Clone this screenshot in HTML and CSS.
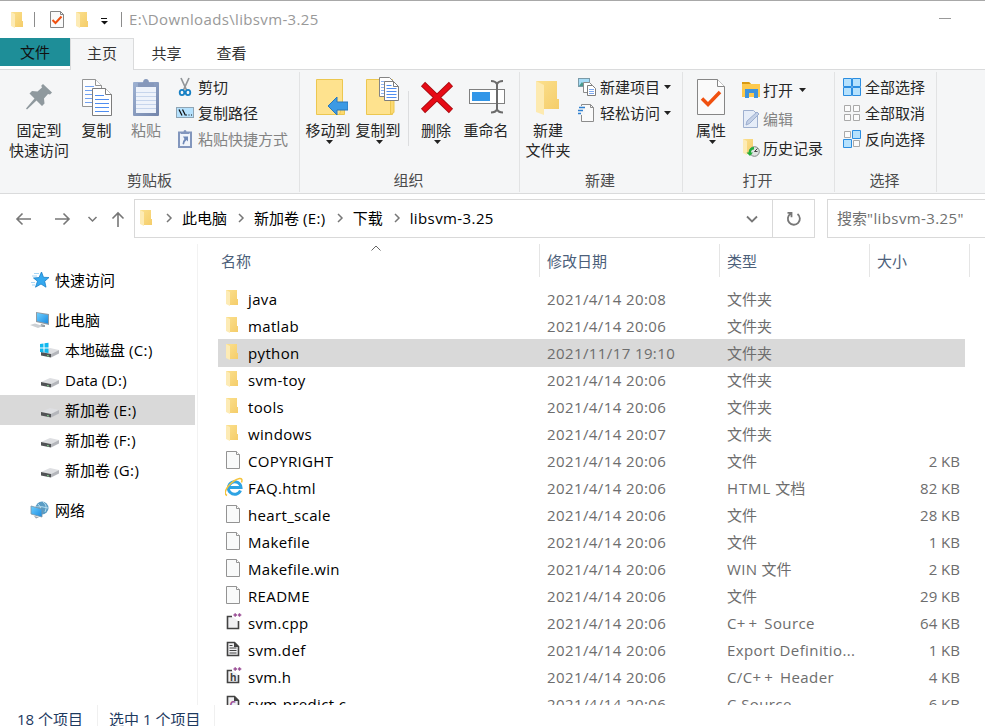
FILE: index.html
```html
<!DOCTYPE html>
<html lang="zh-CN">
<head>
    <meta charset="UTF-8">
    <meta name="viewport" content="width=device-width, initial-scale=1.0">
    <title>E:\Downloads\libsvm-3.25</title>
    <link rel="stylesheet" href="styles.css">
</head>
<body>
    <!-- Shared icons -->
    <svg class="sprite">
        <defs>
            <linearGradient id="gFolder" x1="0" y1="0" x2="1" y2="1">
                <stop offset="0" stop-color="#fbe08e"/>
                <stop offset="1" stop-color="#f5cd6a"/>
            </linearGradient>
            <linearGradient id="gScreen" x1="0" y1="0" x2="1" y2="1">
                <stop offset="0" stop-color="#6fd0ff"/>
                <stop offset="1" stop-color="#1a8ae0"/>
            </linearGradient>
            <linearGradient id="gPaste" x1="0" y1="0" x2="1" y2="1">
                <stop offset="0" stop-color="#9db1d2"/>
                <stop offset="1" stop-color="#7385ab"/>
            </linearGradient>
        </defs>
        <symbol id="folder" viewBox="0 0 16 18">
            <path d="M1 1h11v9h1v6H3z" fill="url(#gFolder)"/>
            <path d="M1 1l4 2v14l-4-2z" fill="#fdebb5"/>
        </symbol>
        <symbol id="file" viewBox="0 0 18 20">
            <path d="M1.500 1.500h10l3 3v14h-13z" fill="#f9fafa" stroke="#939393"/>
            <path d="M11.500 1.500v3h3" fill="#fff" stroke="#939393"/>
        </symbol>
        <symbol id="drive" viewBox="0 0 20 16">
            <path d="M1 9l9-4 9 2-8 4z" fill="#dedfe2"/>
            <path d="M11 11l8-4v3.500l-8 4z" fill="#b4b6bb"/>
            <path d="M1 9l10 2v3.500L1 12.500z" fill="#505255"/>
            <path d="M7 12l2 .4v1l-2-.4z" fill="#7fd08a"/>
        </symbol>
        <symbol id="down" viewBox="0 0 7 4">
            <path d="M0 0h7L3.500 4z" fill="#222"/>
        </symbol>
        <symbol id="sep" viewBox="0 0 8 10">
            <path d="M2 1l4 4-4 4" fill="none" stroke="#777" stroke-width="1.500"/>
        </symbol>
        <symbol id="check" viewBox="0 0 30 38">
            <path d="M1.500 1.500h20l7 7v28h-27z" fill="#fafafa" stroke="#868686"/>
            <path d="M21.500 1.500v7h7" fill="#fff" stroke="#868686"/>
            <path d="M6 20.500l6 6L24 14" fill="none" stroke="#f0500f" stroke-width="3.500"/>
        </symbol>
        <symbol id="page" viewBox="0 0 22 30">
            <path d="M1.500 1.500h13l6 6v21h-19z" fill="#fff" stroke="#7d7d7d"/>
            <path d="M14.500 1.500v6h6" fill="#fff" stroke="#7d7d7d"/>
            <path d="M4 8.500h9M4 12.500h14M4 16.500h14M4 20.500h14M4 24.500h14" stroke="#4f8df0"/>
        </symbol>
    </svg>

    <div class="titlebar">
        <svg class="tb-folder" width="16" height="18"><use href="#folder"/></svg>
        <span class="tb-line"></span>
        <svg class="tb-check" width="16" height="19" viewBox="0 0 16 19">
            <path d="M1.500 1.500h10l3 3v13h-13z" fill="#fafafa" stroke="#868686"/>
            <path d="M11.500 1.500v3h3" fill="none" stroke="#868686"/>
            <path d="M3.500 10l3 3 6-6.500" fill="none" stroke="#f0500f" stroke-width="2"/>
        </svg>
        <svg class="tb-folder2" width="16" height="18"><use href="#folder"/></svg>
        <svg class="tb-custom" width="9" height="8" viewBox="0 0 9 8">
            <path d="M1 1.500h6" stroke="#111"/>
            <path d="M1 4h7L4.500 7.500z" fill="#111"/>
        </svg>
        <span class="tb-line tb-line2"></span>
        <span class="title">E:\Downloads\libsvm-3.25</span>
        <span class="minimize"></span>
    </div>

    <div class="tabs">
        <div class="tab tab-file">文件</div>
        <div class="tab active">主页</div>
        <div class="tab">共享</div>
        <div class="tab">查看</div>
    </div>

    <div class="ribbon">
        <div class="group clipboard">
            <div class="tools">
                <div class="big pin">
                    <svg width="40" height="42" viewBox="0 0 40 42">
                        <path d="M24 7l9 8.500-2 2-2-.5-4 4.500.5 5-2.500 2.500-5.500-5.500L8 32.500 7 31.500l8.500-10-5-5 2.500-2.500 5.500.5 4.500-4-.8-1.800z" fill="#8f999e"/>
                    </svg>
                    <span>固定到<br>快速访问</span>
                </div>
                <div class="big copy">
                    <svg width="40" height="42" viewBox="0 0 40 42">
                        <use href="#page" x="4" y="1" width="22" height="30" opacity="0.8"/>
                        <use href="#page" x="14" y="10" width="22" height="30"/>
                    </svg>
                    <span>复制</span>
                </div>
                <div class="big paste disabled">
                    <svg width="40" height="42" viewBox="0 0 40 42">
                        <rect x="7" y="5" width="26" height="34" rx="1" fill="url(#gPaste)"/>
                        <path d="M10 10h20v26H10z" fill="#eef3fb"/>
                        <path d="M10 15.500h20M10 19.500h20M10 23.500h20M10 27.500h20M10 31.500h20" stroke="#c6d5ec"/>
                        <path d="M12 10V6h5a3 4 0 0 1 6 0h5v4z" fill="#8698bb"/>
                    </svg>
                    <span>粘贴</span>
                </div>
                <div class="list">
                    <div class="small">
                        <svg width="18" height="20" viewBox="0 0 18 20">
                            <path d="M5 1l5.500 12M13 1L7.500 13" stroke="#929699" stroke-width="1.700"/>
                            <ellipse cx="6" cy="15.500" rx="2.300" ry="2.700" fill="none" stroke="#1780c4" stroke-width="1.800"/>
                            <ellipse cx="12" cy="15.500" rx="2.300" ry="2.700" fill="none" stroke="#1780c4" stroke-width="1.800"/>
                        </svg>
                        <span>剪切</span>
                    </div>
                    <div class="small">
                        <svg width="18" height="20" viewBox="0 0 18 20">
                            <rect x=".5" y="4.500" width="17" height="10" fill="#b5e1fd" stroke="#8fa5b5"/>
                            <path d="M3 6.500l3 6M6.500 6.500l3 6" stroke="#111" stroke-width="1.300"/>
                            <path d="M10 12h1M12.500 12h1M15 12h1" stroke="#111"/>
                        </svg>
                        <span>复制路径</span>
                    </div>
                    <div class="small disabled">
                        <svg width="18" height="20" viewBox="0 0 18 20">
                            <rect x="3" y="3.500" width="12" height="14.500" fill="#f0f4fa" stroke="#8296bd" stroke-width="2"/>
                            <path d="M5 5V3h2.500a1.500 2 0 0 1 3 0H13v2z" fill="#8296bd"/>
                            <path d="M7 7.500h5v5l-1.500-1.500Q8 13 8 15.500L6.500 15q0-3 2-5z" fill="#6f89b8"/>
                        </svg>
                        <span>粘贴快捷方式</span>
                    </div>
                </div>
            </div>
            <div class="caption">剪贴板</div>
        </div>

        <div class="group organize">
            <div class="tools">
                <div class="big">
                    <svg width="40" height="42" viewBox="0 0 40 42">
                        <path d="M8.500 2.500h26v35h-26z" fill="#fee28e" stroke="#ecc750"/>
                        <path d="M34.500 27h2v10.500h-5z" fill="#fbd970" stroke="#ecc750"/>
                        <path d="M20 29l9-9v5h11v8H29v5z" fill="#3c9ae4" stroke="#2877bb"/>
                    </svg>
                    <span>移动到</span>
                    <svg class="arrow" width="7" height="4"><use href="#down"/></svg>
                </div>
                <div class="big">
                    <svg width="42" height="42" viewBox="-1 0 42 42">
                        <path d="M8.500 2.500h26v35h-26z" fill="#fee28e" stroke="#ecc750"/>
                        <path d="M32.500 37.500v-14h3.500v12z" fill="#fbd970" stroke="#ecc750"/>
                        <path d="M21.500.5h10l4 4v15h-14z" fill="#fff" stroke="#858585"/>
                        <path d="M23 4.500h7M23 7.500h9M23 10.500h9M23 13.500h9M23 16.500h9" stroke="#8fb5f2"/>
                        <path d="M26.500 4.500h9l5 5v14h-14z" fill="#fff" stroke="#7d7d7d"/>
                        <path d="M35.500 4.500v5h5" fill="none" stroke="#7d7d7d"/>
                        <path d="M28.500 8.500h5M28.500 11.500h10M28.500 14.500h10M28.500 17.500h10M28.500 20.500h10" stroke="#4f8df0"/>
                    </svg>
                    <span>复制到</span>
                    <svg class="arrow" width="7" height="4"><use href="#down"/></svg>
                </div>
                <div class="split"></div>
                <div class="big delete">
                    <svg width="40" height="42" viewBox="0 0 40 42">
                        <path d="M7 7l28 27M35 7L7 34" stroke="#a80d12" stroke-width="6"/>
                        <path d="M7.500 7.500l27 26M34.500 7.500l-27 26" stroke="#e60b16" stroke-width="4.500"/>
                    </svg>
                    <span>删除</span>
                    <svg class="arrow" width="7" height="4"><use href="#down"/></svg>
                </div>
                <div class="big">
                    <svg width="40" height="42" viewBox="0 0 40 42">
                        <rect x="3.500" y="12.500" width="35" height="14" fill="#fff" stroke="#808080"/>
                        <rect x="6" y="15" width="18" height="9" fill="#3296e8"/>
                        <path d="M25 4q4.500 0 6 3 1.500-3 6-3M25 35.500q4.500 0 6-3 1.500 3 6 3M31 6v27" fill="none" stroke="#6b6b6b" stroke-width="2"/>
                    </svg>
                    <span>重命名</span>
                </div>
            </div>
            <div class="caption">组织</div>
        </div>

        <div class="group new">
            <div class="tools">
                <div class="big">
                    <svg width="40" height="42" viewBox="0 0 40 42">
                        <path d="M8 4h21v18h2v10H15z" fill="url(#gFolder)"/>
                        <path d="M8 4l8 4v30l-8-3z" fill="#fdeab0"/>
                    </svg>
                    <span>新建<br>文件夹</span>
                </div>
                <div class="list">
                    <div class="small">
                        <svg width="18" height="20" viewBox="0 0 18 20">
                            <rect x=".5" y="1.500" width="11" height="8" fill="#a6dcf7" stroke="#7a9aa8"/>
                            <path d="M1 9l3-4 3 4z" fill="#4a9a8c"/>
                            <path d="M5.500 5.500h6l3 3v7h-9z" fill="#fff" stroke="#8c8c8c"/>
                            <path d="M9.500 8.500h5l3 3v7h-8z" fill="#fff" stroke="#7d7d7d"/>
                            <path d="M11 12.500h5M11 14.500h5M11 16.500h5" stroke="#7fa9ee"/>
                        </svg>
                        <span>新建项目</span>
                        <svg class="arrow" width="7" height="4"><use href="#down"/></svg>
                    </div>
                    <div class="small">
                        <svg width="18" height="20" viewBox="0 0 18 20">
                            <path d="M3.500 1.500h9l3 3v14h-12z" fill="#fafafa" stroke="#8c8c8c"/>
                            <path d="M12.500 1.500v3h3" fill="none" stroke="#8c8c8c"/>
                            <path d="M0 3h7v9H0z" fill="#f5f6f7"/>
                            <path d="M1 4.500h6M0 7.500h5M0 10.500h3" stroke="#2e7fd0" stroke-width="1.300"/>
                        </svg>
                        <span>轻松访问</span>
                        <svg class="arrow" width="7" height="4"><use href="#down"/></svg>
                    </div>
                </div>
            </div>
            <div class="caption">新建</div>
        </div>

        <div class="group open">
            <div class="tools">
                <div class="big">
                    <svg width="40" height="42" viewBox="0 0 40 42">
                        <use href="#check" x="5" y="1" width="30" height="38"/>
                    </svg>
                    <span>属性</span>
                    <svg class="arrow" width="7" height="4"><use href="#down"/></svg>
                </div>
                <div class="list">
                    <div class="small">
                        <svg width="18" height="20" viewBox="0 0 18 20">
                            <path d="M0 2h7l2 2h9v13H0z" fill="#fdc94c"/>
                            <path d="M0 2h7l2 2H0z" fill="#d99a12"/>
                            <path d="M3 18v-9h13v9h-4v-5H7v5z" fill="#3e93dc"/>
                        </svg>
                        <span>打开</span>
                        <svg class="arrow open-arrow" width="7" height="4"><use href="#down"/></svg>
                    </div>
                    <div class="small disabled">
                        <svg width="18" height="20" viewBox="0 0 18 20">
                            <path d="M1.500 1.500h10l4 4v13h-14z" fill="#e6edf8" stroke="#9fb0cf"/>
                            <path d="M4 16l1-4L15 3l2 2-9.500 9.500z" fill="#c3d0e6" stroke="#9caed0"/>
                        </svg>
                        <span>编辑</span>
                    </div>
                    <div class="small">
                        <svg width="18" height="20" viewBox="0 0 18 20">
                            <path d="M1 1h10v15H4z" fill="url(#gFolder)"/>
                            <path d="M1 1l4 2v14l-4-2z" fill="#fdebb5"/>
                            <circle cx="12.500" cy="13.500" r="4.800" fill="#dfe4e2" stroke="#7d8682"/>
                            <path d="M12.500 13.500l3-3M12.500 13.500h3" stroke="#444"/>
                            <path d="M12 9q-5 0-5.500 5.500H4.500l3.500 3.500 3-3.500H9q0-3 3-3z" fill="#22ad3c"/>
                        </svg>
                        <span>历史记录</span>
                    </div>
                </div>
            </div>
            <div class="caption">打开</div>
        </div>

        <div class="group select">
            <div class="tools">
                <div class="list">
                    <div class="small">
                        <svg width="18" height="20" viewBox="0 0 18 20">
                            <path d="M.5 1.500h8v8h-8zM9.500 1.500h8v8h-8zM.5 10.500h8v8h-8zM9.500 10.500h8v8h-8z" fill="#b5e1fd" stroke="#2b8de0"/>
                        </svg>
                        <span>全部选择</span>
                    </div>
                    <div class="small">
                        <svg width="18" height="20" viewBox="0 0 18 20">
                            <path d="M1.500 2.500h6v6h-6zM10.500 2.500h6v6h-6zM1.500 11.500h6v6h-6zM10.500 11.500h6v6h-6z" fill="#fbfbfb" stroke="#a9a9a9"/>
                        </svg>
                        <span>全部取消</span>
                    </div>
                    <div class="small">
                        <svg width="18" height="20" viewBox="0 0 18 20">
                            <path d="M1.500 2.500h6v6h-6zM10.500 11.500h6v6h-6z" fill="#fbfbfb" stroke="#a9a9a9"/>
                            <path d="M9.500 1.500h8v8h-8zM.5 10.500h8v8h-8z" fill="#b5e1fd" stroke="#2b8de0"/>
                        </svg>
                        <span>反向选择</span>
                    </div>
                </div>
            </div>
            <div class="caption">选择</div>
        </div>
    </div>

    <div class="navbar">
        <div class="nav-buttons">
            <svg width="134" height="40" viewBox="0 0 134 40" fill="none" stroke="#777" stroke-width="1.600">
                <path d="M31 20H17M22.500 14.500L17 20l5.500 5.500"/>
                <path d="M55 20h14M63.500 14.500L69 20l-5.500 5.500"/>
                <path d="M88.500 18l4 4 4-4" stroke-width="1.500"/>
                <path d="M118 28V14M112.500 19.500L118 14l5.500 5.500"/>
            </svg>
        </div>
        <div class="address">
            <svg width="16" height="18"><use href="#folder"/></svg>
            <svg class="crumb-sep" width="8" height="10"><use href="#sep"/></svg>
            <span class="crumb">此电脑</span>
            <svg class="crumb-sep" width="8" height="10"><use href="#sep"/></svg>
            <span class="crumb">新加卷 <span class="latin">(E:)</span></span>
            <svg class="crumb-sep" width="8" height="10"><use href="#sep"/></svg>
            <span class="crumb">下载</span>
            <svg class="crumb-sep" width="8" height="10"><use href="#sep"/></svg>
            <span class="crumb latin">libsvm-3.25</span>
            <svg class="dropdown" width="12" height="8" viewBox="0 0 12 8">
                <path d="M1 1.500l5 5 5-5" fill="none" stroke="#777" stroke-width="1.800"/>
            </svg>
        </div>
        <div class="refresh">
            <svg width="18" height="18" viewBox="0 0 18 18">
                <path d="M12.500 4a6 6 0 1 1-7-.2M2.500 2.800h4v4.500" fill="none" stroke="#777" stroke-width="1.800"/>
            </svg>
        </div>
        <div class="search">搜索<span class="latin">"libsvm-3.25"</span></div>
    </div>

    <div class="main">
        <div class="sidebar">
            <div class="node root">
                <svg width="20" height="18" viewBox="0 0 20 18">
                    <path d="M11.500 1l2 5.300 5.500.2-4.300 3.700 1.300 6-5-3.200-5.500 3.200 2-6L3.500 7l5.500-.4z" fill="#35a9ef" stroke="#1b7fc8" stroke-width=".8"/>
                    <path d="M4 2.500h5M2 5h5M1 11.500h4M2 14h3" stroke="#8fcbf2" stroke-width=".8"/>
                </svg>
                <span>快速访问</span>
            </div>
            <div class="node root">
                <svg width="20" height="18" viewBox="0 0 20 18">
                    <path d="M6 1l13 2v11L6 11z" fill="#8f9aa3"/>
                    <path d="M7 2l11 2v8.500L7 10z" fill="url(#gScreen)"/>
                    <path d="M11 13l4 1v2h-5z" fill="#9aa0a6"/>
                    <path d="M0 14l5-1.500 8 2.500-5 2z" fill="#ccd0d4"/>
                </svg>
                <span>此电脑</span>
            </div>
            <div class="node">
                <svg width="20" height="18" viewBox="0 0 20 18">
                    <use href="#drive" x="0" y="2" width="20" height="16"/>
                    <path d="M0 3l3.500-.5v4H0zM4.500 2.300L8.500 1.700v4.800h-4zM0 7.500h3.500v4L0 11zM4.500 7.500h4v4.600l-4-.5z" fill="#10b8ee"/>
                </svg>
                <span>本地磁盘 <span class="latin">(C:)</span></span>
            </div>
            <div class="node">
                <svg width="20" height="18" viewBox="0 0 20 18"><use href="#drive" x="0" y="2" width="20" height="16"/></svg>
                <span>Data <span class="latin">(D:)</span></span>
            </div>
            <div class="node selected">
                <svg width="20" height="18" viewBox="0 0 20 18"><use href="#drive" x="0" y="2" width="20" height="16"/></svg>
                <span>新加卷 <span class="latin">(E:)</span></span>
            </div>
            <div class="node">
                <svg width="20" height="18" viewBox="0 0 20 18"><use href="#drive" x="0" y="2" width="20" height="16"/></svg>
                <span>新加卷 <span class="latin">(F:)</span></span>
            </div>
            <div class="node">
                <svg width="20" height="18" viewBox="0 0 20 18"><use href="#drive" x="0" y="2" width="20" height="16"/></svg>
                <span>新加卷 <span class="latin">(G:)</span></span>
            </div>
            <div class="node root network">
                <svg width="20" height="18" viewBox="0 0 20 18">
                    <circle cx="12" cy="7" r="6.500" fill="#5a9cc4"/>
                    <path d="M8 3q4 3 2 6M13 1q5 3 2 10M6 6q6-1 12 1" fill="none" stroke="#b5dcee"/>
                    <path d="M1 5l11 3v8L1 13z" fill="url(#gScreen)" stroke="#7b93a3" stroke-width=".8"/>
                    <path d="M4 15l5 1.300-3 1.200z" fill="#9aa0a6"/>
                </svg>
                <span>网络</span>
            </div>
        </div>

        <div class="files">
            <div class="row header">
                <div class="name">名称</div>
                <div class="date">修改日期</div>
                <div class="type">类型</div>
                <div class="size">大小</div>
                <svg class="sort" width="10" height="6" viewBox="0 0 10 6">
                    <path d="M.5 5.500L5 1l4.500 4.500" fill="none" stroke="#666"/>
                </svg>
            </div>
            <div class="rows">
                <div class="row">
                    <div class="name"><svg width="16" height="18"><use href="#folder"/></svg>java</div>
                    <div class="date">2021/4/14 20:08</div>
                    <div class="type">文件夹</div>
                    <div class="size"></div>
                </div>
                <div class="row">
                    <div class="name"><svg width="16" height="18"><use href="#folder"/></svg>matlab</div>
                    <div class="date">2021/4/14 20:06</div>
                    <div class="type">文件夹</div>
                    <div class="size"></div>
                </div>
                <div class="row selected">
                    <div class="name"><svg width="16" height="18"><use href="#folder"/></svg>python</div>
                    <div class="date">2021/11/17 19:10</div>
                    <div class="type">文件夹</div>
                    <div class="size"></div>
                </div>
                <div class="row">
                    <div class="name"><svg width="16" height="18"><use href="#folder"/></svg>svm-toy</div>
                    <div class="date">2021/4/14 20:06</div>
                    <div class="type">文件夹</div>
                    <div class="size"></div>
                </div>
                <div class="row">
                    <div class="name"><svg width="16" height="18"><use href="#folder"/></svg>tools</div>
                    <div class="date">2021/4/14 20:06</div>
                    <div class="type">文件夹</div>
                    <div class="size"></div>
                </div>
                <div class="row">
                    <div class="name"><svg width="16" height="18"><use href="#folder"/></svg>windows</div>
                    <div class="date">2021/4/14 20:07</div>
                    <div class="type">文件夹</div>
                    <div class="size"></div>
                </div>
                <div class="row">
                    <div class="name"><svg class="doc" width="18" height="20"><use href="#file"/></svg>COPYRIGHT</div>
                    <div class="date">2021/4/14 20:06</div>
                    <div class="type">文件</div>
                    <div class="size">2 KB</div>
                </div>
                <div class="row">
                    <div class="name">
                        <svg class="doc" width="18" height="20" viewBox="0 0 18 20">
                            <path d="M15.500 13.500A6.300 6.300 0 1 1 16 10.500H5" fill="none" stroke="#2ea3e3" stroke-width="3"/>
                            <path d="M2 18.500q-4-2 1-9Q9 2.500 14.500 1.500q3.500-.4 2 4" fill="none" stroke="#f3c33c" stroke-width="1.500"/>
                        </svg>FAQ.html
                    </div>
                    <div class="date">2021/4/14 20:06</div>
                    <div class="type"><span class="html">HTML</span> 文档</div>
                    <div class="size">82 KB</div>
                </div>
                <div class="row">
                    <div class="name"><svg class="doc" width="18" height="20"><use href="#file"/></svg>heart_scale</div>
                    <div class="date">2021/4/14 20:06</div>
                    <div class="type">文件</div>
                    <div class="size">28 KB</div>
                </div>
                <div class="row">
                    <div class="name"><svg class="doc" width="18" height="20"><use href="#file"/></svg>Makefile</div>
                    <div class="date">2021/4/14 20:06</div>
                    <div class="type">文件</div>
                    <div class="size">1 KB</div>
                </div>
                <div class="row">
                    <div class="name"><svg class="doc" width="18" height="20"><use href="#file"/></svg>Makefile.win</div>
                    <div class="date">2021/4/14 20:06</div>
                    <div class="type"><span class="latin">WIN</span> 文件</div>
                    <div class="size">2 KB</div>
                </div>
                <div class="row">
                    <div class="name"><svg class="doc" width="18" height="20"><use href="#file"/></svg>README</div>
                    <div class="date">2021/4/14 20:06</div>
                    <div class="type">文件</div>
                    <div class="size">29 KB</div>
                </div>
                <div class="row">
                    <div class="name">
                        <svg class="doc" width="18" height="20" viewBox="0 0 18 20">
                            <path d="M7 4.500H2.500v12h11V9" fill="#f0f0f2" stroke="#424242" stroke-width="1.600"/>
                            <path d="M8.500 3h3.500M10.200 1.200v3.600M12.800 3h3.500M14.500 1.200v3.600" stroke="#9b4f96" stroke-width="1.400"/>
                        </svg>svm.cpp
                    </div>
                    <div class="date">2021/4/14 20:06</div>
                    <div class="type latin">C<span class="plus">++</span> Source</div>
                    <div class="size">64 KB</div>
                </div>
                <div class="row">
                    <div class="name">
                        <svg class="doc" width="18" height="20" viewBox="0 0 18 20">
                            <path d="M2.500 3.500h7l4 4v9h-11z" fill="#f0f0f2" stroke="#424242" stroke-width="1.600"/>
                            <path d="M4.500 6.500h3M4.500 9h7M4.500 11.500h7M4.500 14h7" stroke="#424242" stroke-width="1.200"/>
                            <path d="M9 3v5h5z" fill="#424242"/>
                        </svg>svm.def
                    </div>
                    <div class="date">2021/4/14 20:06</div>
                    <div class="type latin">Export Definitio...</div>
                    <div class="size">1 KB</div>
                </div>
                <div class="row">
                    <div class="name">
                        <svg class="doc" width="18" height="20" viewBox="0 0 18 20">
                            <path d="M7 4.500H2.500v12h11V9" fill="#f0f0f2" stroke="#424242" stroke-width="1.600"/>
                            <path d="M8.500 3h3.500M10.200 1.200v3.600M12.800 3h3.500M14.500 1.200v3.600" stroke="#9b4f96" stroke-width="1.400"/>
                            <text class="glyph" x="5" y="14.500" fill="#424242">h</text>
                        </svg>svm.h
                    </div>
                    <div class="date">2021/4/14 20:06</div>
                    <div class="type latin">C/C<span class="plus">++</span> Header</div>
                    <div class="size">4 KB</div>
                </div>
                <div class="row">
                    <div class="name">
                        <svg class="doc" width="18" height="20" viewBox="0 0 18 20">
                            <path d="M2.500 3.500h7l4 4v9h-11z" fill="#f0f0f2" stroke="#424242" stroke-width="1.600"/>
                            <path d="M9 3v5h5z" fill="#424242"/>
                            <text class="glyph" x="4.500" y="16" fill="#9b4f96">C</text>
                        </svg>svm-predict.c
                    </div>
                    <div class="date">2021/4/14 20:06</div>
                    <div class="type latin">C Source</div>
                    <div class="size">6 KB</div>
                </div>
            </div>
        </div>
    </div>

    <div class="statusbar">
        <span>18 个项目</span>
        <span>选中 1 个项目</span>
    </div>
</body>
</html>
```
FILE: styles.css
```css
* {
    margin: 0;
    padding: 0;
    box-sizing: border-box;
}
body {
    width: 985px;
    height: 726px;
    overflow: hidden;
    display: flex;
    flex-direction: column;
    background-color: #fff;
    color: #000;
    font-family: "Open Sans", "Noto Sans CJK SC", sans-serif;
    font-size: 15px;
    line-height: 20px;
    white-space: nowrap;
}
svg {
    flex: none;
    display: block;
}
.sprite {
    position: absolute;
    width: 0;
    height: 0;
}
.latin {
    letter-spacing: 0.4px;
}
.html {
    letter-spacing: 0.9px;
}
.plus {
    letter-spacing: 3px;
}

/* Title bar */
.titlebar {
    height: 38px;
    flex: none;
    display: flex;
    align-items: center;
    border-top: 1px solid #a8a8a8;
    padding-left: 10px;
}
.tb-line {
    width: 1px;
    height: 15px;
    margin-left: 8px;
    background-color: #8c8c8c;
}
.tb-check {
    margin-left: 14px;
}
.tb-folder2 {
    margin-left: 10px;
}
.tb-custom {
    margin-left: 9px;
    margin-top: 3px;
}
.tb-line2 {
    margin-left: 12px;
}
.title {
    margin-left: 7px;
    margin-bottom: 2px;
    color: #999;
    letter-spacing: 0.35px;
}
.minimize {
    width: 12px;
    height: 1px;
    margin-left: auto;
    margin-right: 34px;
    margin-bottom: 2px;
    background-color: #999;
}

/* Tabs */
.tabs {
    height: 32px;
    flex: none;
    display: flex;
    border-bottom: 1px solid #dadbdc;
}
.tab {
    width: 65px;
    height: 32px;
    line-height: 31px;
    text-align: center;
    color: #333;
}
.tab-file {
    width: 70px;
    height: 28px;
    line-height: 29px;
    background-color: #1e8e98;
    color: #111;
}
.tab.active {
    width: 64px;
    border: 1px solid #dadbdc;
    border-bottom: none;
    background-color: #f5f6f7;
    line-height: 29px;
}

/* Ribbon */
.ribbon {
    height: 124px;
    flex: none;
    display: flex;
    background-color: #f5f6f7;
    border-bottom: 1px solid #dadbdc;
    color: #262626;
}
.group {
    height: 120px;
    margin-top: 2px;
    display: flex;
    flex-direction: column;
    border-right: 1px solid #e2e3e4;
}
.clipboard {
    width: 300px;
}
.organize {
    width: 220px;
}
.new {
    width: 163px;
}
.open {
    width: 152px;
}
.select {
    width: 102px;
}
.tools {
    height: 98px;
    display: flex;
    padding-top: 5px;
}
.caption {
    padding-right: 2px;
    text-align: center;
    color: #4b4b4b;
}
.clipboard .caption {
    padding-right: 0;
}
.big {
    display: flex;
    flex-direction: column;
    align-items: center;
    text-align: center;
    width: 50px;
}
.big span {
    margin-top: 1px;
}
.big .arrow {
    margin-left: 3px;
}
.pin {
    width: 70px;
    margin-left: 4px;
}
.copy {
    width: 45px;
}
.paste {
    width: 54px;
}
.disabled {
    color: #838383;
}
.list {
    display: flex;
    flex-direction: column;
    gap: 6px;
}
.small {
    height: 20px;
    display: flex;
    align-items: center;
    gap: 4px;
}
.clipboard .list {
    margin-left: 3px;
}
.organize .tools {
    padding-left: 3px;
}
.split {
    width: 1px;
    height: 55px;
    margin: 14px 2px 0 5px;
    background-color: #dcdddf;
}
.new .tools {
    padding-left: 3px;
}
.new .list {
    margin-left: 5px;
}
.open .tools {
    padding-left: 3px;
}
.open .list {
    margin-left: 6px;
    padding-top: 3px;
    gap: 9px;
}
.open .small {
    gap: 3px;
}
.open-arrow {
    margin-left: 3px;
}
.select .tools {
    padding-left: 8px;
}

/* Address bar */
.navbar {
    height: 50px;
    flex: none;
    display: flex;
    padding-top: 5px;
}
.nav-buttons {
    width: 134px;
}
.address,
.refresh,
.search {
    height: 39px;
    display: flex;
    align-items: center;
    border: 1px solid #d9d9d9;
}
.address {
    width: 639px;
    padding-left: 4px;
}
.address > svg,
.crumb {
    margin-bottom: 2px;
}
.crumb-sep {
    margin-left: 10px;
    margin-right: 9px;
}
.address > .dropdown {
    margin-left: auto;
    margin-right: 14px;
    margin-bottom: 0;
}
.refresh {
    width: 42px;
    border-left: none;
    justify-content: center;
}
.search {
    flex: 1;
    margin-left: 12px;
    padding-left: 9px;
    padding-bottom: 1px;
    border-right: none;
    color: #707070;
}

/* Main area */
.main {
    height: 461px;
    flex: none;
    display: flex;
    overflow: hidden;
}
.sidebar {
    width: 198px;
    padding-top: 21px;
    border-right: 1px solid #f2f2f2;
}
.node {
    width: 195px;
    height: 30px;
    display: flex;
    align-items: center;
    gap: 5px;
    padding-left: 40px;
}
.node.root {
    padding-left: 30px;
    margin-bottom: 10px;
}
.node.root + .node:not(.root) {
    margin-top: -10px;
}
.node.network {
    margin-top: 10px;
}
.selected {
    background-color: #d9d9d9;
}
.files {
    flex: 1;
    padding-left: 20px;
}
.row {
    display: grid;
    grid-template-columns: 322px 180px 150px 95px;
    width: 747px;
    height: 27px;
    line-height: 28px;
    color: #6d6d6d;
}
.row.selected {
    height: 28px;
    margin-bottom: -1px;
}
.row .name {
    display: flex;
    align-items: center;
    height: 28px;
    gap: 8px;
    padding-left: 5px;
    color: #000;
    letter-spacing: 0.35px;
}
.row .name svg {
    width: 20px;
    margin-right: -3px;
    margin-bottom: 3px;
}
.row .name .doc {
    width: 18px;
    margin-left: 2px;
    margin-right: -3px;
}
.row .date,
.row .type {
    padding-left: 7px;
}
.row .date {
    letter-spacing: 0.4px;
}
.row .size {
    padding-right: 5px;
    text-align: right;
}
.row.header {
    position: relative;
    grid-template-columns: 322px 180px 150px 100px;
    width: 752px;
    height: 33px;
    line-height: 34px;
    margin-bottom: 8px;
}
.row.header div {
    height: 33px;
    border-right: 1px solid #e5e5e5;
    padding-left: 7px;
    color: #4c607a;
    letter-spacing: 0;
    text-align: left;
}
.row.header .name {
    padding-left: 3px;
}
.row .sort {
    position: absolute;
    left: 153px;
    top: 1px;
}
.glyph {
    font: bold 10px "Noto Sans", sans-serif;
}

/* Status bar */
.statusbar {
    height: 21px;
    flex: none;
    display: flex;
    padding-left: 17px;
    line-height: 28px;
    color: #1e3a5f;
}
.statusbar span {
    padding-right: 14px;
    margin-right: 11px;
    border-right: 1px solid #f0f0f0;
}
```
